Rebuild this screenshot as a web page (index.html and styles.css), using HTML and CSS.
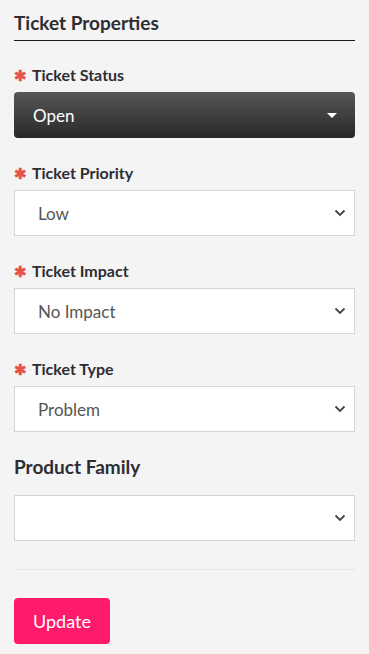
FILE: index.html
```html
<!DOCTYPE html>
<html lang="en">
<head>
    <meta charset="UTF-8">
    <meta name="viewport" content="width=device-width, initial-scale=1.0">
    <title>Ticket Properties</title>
    <link rel="stylesheet" href="styles.css">
</head>
<body>
    <div class="panel">
        <h2 class="panel-title">Ticket Properties</h2>

        <div class="field">
            <label class="field-label required">Ticket Status</label>
            <div class="select select-dark">
                <span class="select-value">Open</span>
                <span class="caret"></span>
            </div>
        </div>

        <div class="field">
            <label class="field-label required">Ticket Priority</label>
            <div class="select">
                <span class="select-value">Low</span>
                <svg class="chevron" width="12" height="8" viewBox="0 0 12 8"><path d="M1.5 1.5 L6 6 L10.5 1.5" fill="none" stroke="#444" stroke-width="1.8"/></svg>
            </div>
        </div>

        <div class="field">
            <label class="field-label required">Ticket Impact</label>
            <div class="select">
                <span class="select-value">No Impact</span>
                <svg class="chevron" width="12" height="8" viewBox="0 0 12 8"><path d="M1.5 1.5 L6 6 L10.5 1.5" fill="none" stroke="#444" stroke-width="1.8"/></svg>
            </div>
        </div>

        <div class="field">
            <label class="field-label required">Ticket Type</label>
            <div class="select">
                <span class="select-value">Problem</span>
                <svg class="chevron" width="12" height="8" viewBox="0 0 12 8"><path d="M1.5 1.5 L6 6 L10.5 1.5" fill="none" stroke="#444" stroke-width="1.8"/></svg>
            </div>
        </div>

        <div class="field field-plain">
            <label class="field-label field-label-lg">Product Family</label>
            <div class="select">
                <span class="select-value"></span>
                <svg class="chevron" width="12" height="8" viewBox="0 0 12 8"><path d="M1.5 1.5 L6 6 L10.5 1.5" fill="none" stroke="#444" stroke-width="1.8"/></svg>
            </div>
        </div>

        <div class="divider"></div>

        <button class="btn-update">Update</button>
    </div>
</body>
</html>
```

FILE: styles.css
```css
body {
    margin: 0;
    padding: 0;
    background-color: #f4f4f4;
    font-family: 'Lato', 'Noto Sans', sans-serif;
    color: #333;
}

.panel {
    padding: 11px 14px 10px 14px;
}

.panel-title {
    margin: 0;
    font-size: 19px;
    font-weight: bold;
    color: #2d2d33;
    line-height: 24px;
    padding-bottom: 5px;
    border-bottom: 1px solid #1a1a1a;
}

.field {
    margin-top: 24px;
}

.field + .field {
    margin-top: 25px;
}

.field-label {
    display: flex;
    align-items: center;
    font-size: 16px;
    font-weight: bold;
    color: #2d2d33;
    line-height: 20px;
    margin-bottom: 7px;
}

.required::before {
    content: '\2731';
    color: #e5534b;
    font-size: 15px;
    margin-right: 5px;
    margin-left: 0;
}

.field + .field-plain {
    margin-top: 23px;
}

.field-label-lg {
    font-size: 19px;
    line-height: 24px;
    margin-bottom: 16px;
}

.select {
    height: 46px;
    box-sizing: border-box;
    display: flex;
    align-items: center;
    justify-content: space-between;
    background: #fff;
    border: 1px solid #d0d6e0;
    padding: 0 8px 0 23px;
    font-size: 17px;
    color: #555;
}

.select-dark {
    background: linear-gradient(to bottom, #575757, #282828);
    border: none;
    border-radius: 4px;
    color: #fff;
    padding: 0 18px 0 19px;
}

.caret {
    width: 0;
    height: 0;
    border-left: 5px solid transparent;
    border-right: 5px solid transparent;
    border-top: 5px solid #fff;
}

.divider {
    height: 1px;
    background: #e6e6e6;
    margin: 28px 0 28px 0;
}

.btn-update {
    background: #ff1a6c;
    color: #fff;
    border: none;
    border-radius: 4px;
    font-family: inherit;
    font-size: 18px;
    height: 46px;
    padding: 0 19px;
}
```
